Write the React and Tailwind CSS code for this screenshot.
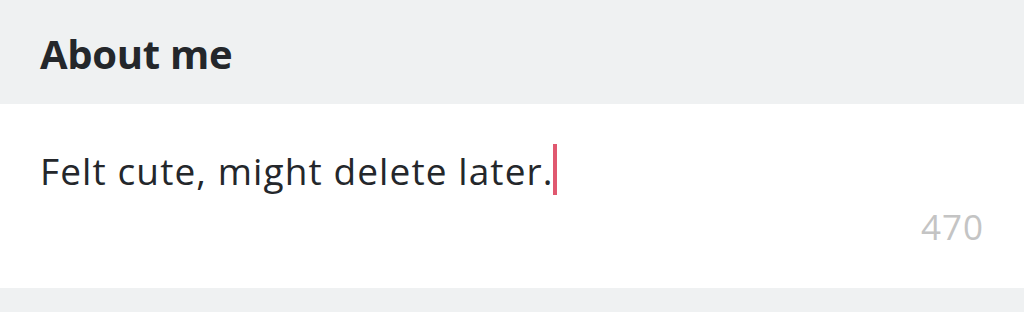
export default function App() {
  return (
    <div className="w-[1024px] h-[312px] bg-[#eff1f2] font-['Open_Sans',sans-serif] text-[#24272b]">
      <div className="h-[104px] flex items-center px-10">
        <h2 className="text-[40px] font-bold leading-none tracking-[-0.3px] pt-[4px]">About me</h2>
      </div>
      <div className="h-[184px] bg-white px-10 flex flex-col">
        <div className="mt-[40px] h-[51px] flex items-center">
          <span className="text-[37px] leading-none tracking-[1.1px] pt-[1px]">Felt cute, might delete later.</span>
          <span className="w-[4px] h-[51px] bg-[#e0586f] -ml-[1px]" />
        </div>
        <div className="mt-[14px] self-end text-[35px] leading-none tracking-[1px] text-[#c4c4c4]">
          470
        </div>
      </div>
    </div>
  );
}
